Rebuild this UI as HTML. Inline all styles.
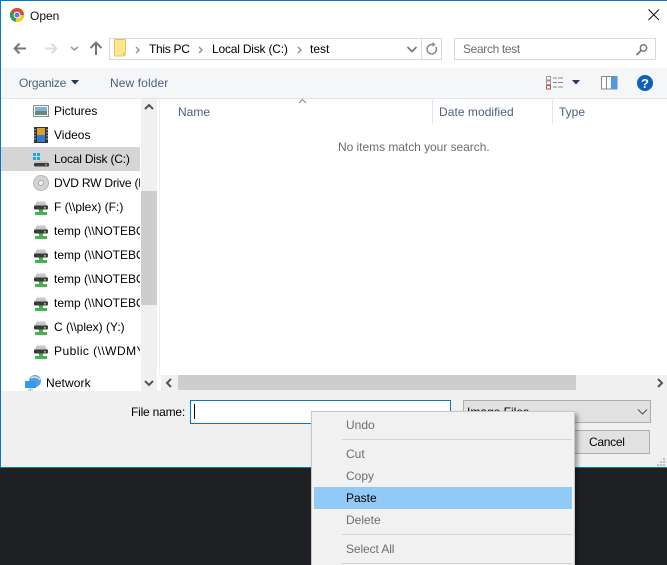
<!DOCTYPE html>
<html><head><meta charset="utf-8"><style>
html,body{margin:0;padding:0;width:667px;height:565px;overflow:hidden;background:#1f2023}
*{box-sizing:border-box}
body{font-family:"Liberation Sans",sans-serif;font-size:12px;color:#000;position:relative}
.a{position:absolute}
.t{position:absolute;white-space:nowrap;line-height:16px;font-size:12px}
.c{color:#4c607a}
.m{color:#6d6d6d}
svg{position:absolute;overflow:hidden}
</style></head><body>
<div class="a" style="left:0;top:0;width:667px;height:468px;background:#fff;border-top:1px solid #0078d7;border-left:1px solid #0078d7;border-bottom:1px solid #0078d7"></div>

<svg style="left:10px;top:8px" width="14" height="14" viewBox="0 0 14 14"><circle cx="7" cy="7" r="7" fill="#e0453a"/><path d="M7 7L13.9 7A7 7 0 0 1 5 13.7Z" fill="#f7c92e"/><path d="M7 7L5.5 13.8A7 7 0 0 1 1 3.4Z" fill="#2f9e4f"/><circle cx="7" cy="7" r="3.4" fill="#fff"/><circle cx="7" cy="7" r="2.5" fill="#4a86e8"/></svg>
<div class="t" style="left:30px;top:8px;color:#111">Open</div>
<svg style="left:647px;top:8px" width="14" height="14"><path d="M1.500 1.500L12 12M12 1.500L1.500 12" stroke="#111" stroke-width="1" fill="none"/></svg>

<svg style="left:13px;top:40px" width="100" height="18"><path d="M2 8.500H13M6.500 3.500L1.700 8.500L6.500 13.500" stroke="#777" stroke-width="2" fill="none"/><path d="M32 8.500H43M38.500 3.500L43.300 8.500L38.500 13.500" stroke="#dcdcdc" stroke-width="2" fill="none"/><path d="M58 7L61.500 10L65 7" stroke="#999" stroke-width="1.500" fill="none"/><path d="M83 2V15M77.500 8L83 2.500L88.500 8" stroke="#777" stroke-width="2" fill="none"/></svg>

<div class="a" style="left:109px;top:38px;width:333px;height:22px;background:#fff;border:1px solid #d9d9d9"></div>
<div class="a" style="left:421px;top:39px;width:1px;height:20px;background:#d9d9d9"></div>
<svg style="left:113px;top:39px" width="15" height="18"><path d="M1.500 .5H12.500V13.500L10 17H1.500Z" fill="#fde68f" stroke="#e3c565"/><path d="M10 13.500H12.500V17H10Z" fill="#e9c650"/></svg>
<svg style="left:134px;top:44px" width="190" height="12"><path d="M2 3L5 6L2 9" stroke="#8d8d8d" stroke-width="1.400" fill="none"/><path d="M65 3L68 6L65 9" stroke="#8d8d8d" stroke-width="1.400" fill="none"/><path d="M164 3L167 6L164 9" stroke="#8d8d8d" stroke-width="1.400" fill="none"/></svg>
<div class="t" style="left:149px;top:41px;letter-spacing:-.3px">This PC</div>
<div class="t" style="left:212px;top:41px;letter-spacing:-.2px">Local Disk (C:)</div>
<div class="t" style="left:310px;top:41px">test</div>
<svg style="left:406px;top:45px" width="12" height="9"><path d="M1.500 2L6 6.500L10.500 2" stroke="#777" stroke-width="1.700" fill="none"/></svg>
<svg style="left:425px;top:42px" width="14" height="14"><path d="M10.800 4.800A4.700 4.700 0 1 1 7 2.500H10" stroke="#888" stroke-width="1.500" fill="none"/><path d="M7.500 0V5L10.500 2.500Z" fill="#888"/></svg>

<div class="a" style="left:454px;top:38px;width:202px;height:22px;background:#fff;border:1px solid #d9d9d9"></div>
<div class="t" style="left:463px;top:41px;color:#6d6d6d;letter-spacing:-.35px">Search test</div>
<svg style="left:635px;top:43px" width="14" height="13"><circle cx="8.500" cy="5" r="3.200" stroke="#777" stroke-width="1.500" fill="none"/><path d="M6 7.500L1.500 12" stroke="#777" stroke-width="1.800"/></svg>

<div class="a" style="left:1px;top:68px;width:666px;height:30px;background:#f5f6f7"></div>
<div class="a" style="left:1px;top:98px;width:666px;height:1px;background:#e5e5e5"></div>
<div class="t c" style="left:19px;top:75px;letter-spacing:-.2px">Organize</div>
<svg style="left:71px;top:80px" width="9" height="5"><path d="M0 0H8L4 4.500Z" fill="#1f3a5f"/></svg>
<div class="t c" style="left:110px;top:75px;letter-spacing:.1px">New folder</div>
<svg style="left:546px;top:76px" width="36" height="14"><rect x=".5" y=".5" width="4" height="3.500" fill="none" stroke="#9a9a9a"/><rect x=".5" y="5" width="4" height="3.500" fill="none" stroke="#9a9a9a"/><rect x=".5" y="9.500" width="4" height="3.500" fill="none" stroke="#c05050"/><path d="M7 2H11M12 2H17M7 6.500H11M12 6.500H17M7 11H11M12 11H17" stroke="#8a8a8a"/><path d="M26 4H34L30 8.500Z" fill="#1f3a5f"/></svg>
<svg style="left:601px;top:76px" width="17" height="14"><rect x=".5" y=".5" width="15.500" height="12.500" fill="#fff" stroke="#8a8a8a"/><rect x="10" y="1" width="6" height="12" fill="#4a9ae8"/><path d="M5.500 1V13" stroke="#8a8a8a"/></svg>
<svg style="left:637px;top:75px" width="16" height="16"><circle cx="8" cy="8" r="8" fill="#0b62bd"/><text x="8" y="13" font-family="Liberation Sans" font-size="13" font-weight="bold" fill="#fff" text-anchor="middle">?</text></svg>

<!-- nav -->
<div class="a" style="left:1px;top:147px;width:139px;height:24px;background:#d5d5d5"></div>
<div class="a" style="left:141px;top:99px;width:16px;height:292px;background:#f0f0f0"></div>
<div class="a" style="left:141px;top:191px;width:16px;height:114px;background:#cdcdcd"></div>
<svg style="left:144px;top:103px" width="11" height="8"><path d="M1 6L5 2L9 6" stroke="#555" stroke-width="2" fill="none"/></svg>
<svg style="left:144px;top:379px" width="11" height="8"><path d="M1 2L5 6L9 2" stroke="#555" stroke-width="2" fill="none"/></svg>
<div class="a" style="left:159px;top:99px;width:1px;height:276px;background:#f0f0f0"></div>

<svg style="left:33px;top:105px" width="16" height="12"><rect x=".5" y=".5" width="15" height="11" fill="#fff" stroke="#8d8d8d"/><rect x="2" y="2" width="12" height="4" fill="#7fb2dc"/><rect x="2" y="6" width="12" height="4" fill="#5f8f78"/></svg>
<svg style="left:34px;top:127px" width="14" height="16"><rect width="14" height="16" fill="#333"/><rect x="3" y="1" width="8" height="7" fill="#d9a030"/><rect x="3" y="8" width="8" height="7" fill="#2f78d0"/><path d="M1 2V14M13 2V14" stroke="#ccc" stroke-dasharray="1.500 1.500"/></svg>
<svg style="left:33px;top:153px" width="16" height="14"><path d="M0 0H3V3H0ZM4 0H7V3H4ZM0 4H3V7H0ZM4 4H7V7H4Z" fill="#18a8e8"/><path d="M3 8H14L16 10.500H1Z" fill="#c4c4c4"/><rect x="1" y="10" width="15" height="3.500" rx="1" fill="#3c3c3c"/><rect x="12" y="11" width="2" height="1.500" fill="#4fd14f"/></svg>
<svg style="left:33px;top:175px" width="16" height="16"><circle cx="8" cy="8" r="7.500" fill="#d3d3d3" stroke="#b5b5b5"/><circle cx="8" cy="8" r="2.500" fill="#f2f2f2" stroke="#aaa"/></svg>

<svg style="left:34px;top:201px" width="14" height="15"><defs><g id="nd"><path d="M2 2.500Q2 .5 4 .5H10Q12 .5 12 2.500L14 5H0Z" fill="#c6c6c6"/><rect x="0" y="4.500" width="14" height="4" rx="1" fill="#3a3a3a"/><rect x="10" y="6" width="2" height="1.500" fill="#5fd15f"/><path d="M5 8.500H9V11H13V14H1V11H5Z" fill="#45b34e"/></g></defs><use href="#nd"/></svg>
<svg style="left:34px;top:225px" width="14" height="15"><use href="#nd"/></svg>
<svg style="left:34px;top:249px" width="14" height="15"><use href="#nd"/></svg>
<svg style="left:34px;top:273px" width="14" height="15"><use href="#nd"/></svg>
<svg style="left:34px;top:297px" width="14" height="15"><use href="#nd"/></svg>
<svg style="left:34px;top:321px" width="14" height="15"><use href="#nd"/></svg>
<svg style="left:34px;top:345px" width="14" height="15"><use href="#nd"/></svg>
<svg style="left:25px;top:375px" width="17" height="16"><circle cx="10" cy="6" r="6" fill="#5b9bd5"/><path d="M6 3C9 1 13 2 15 5" stroke="#cfe6f7" stroke-width="1.500" fill="none"/><rect x="0" y="6" width="11" height="7" fill="#2e9bf0"/><path d="M3 15H8M5.500 13V15" stroke="#9bb" stroke-width="1"/></svg>

<div class="a" style="left:54px;top:99px;width:86px;height:292px;overflow:hidden">
<div class="t" style="left:0;top:4px">Pictures</div>
<div class="t" style="left:0;top:28px">Videos</div>
<div class="t" style="left:0;top:52px;letter-spacing:-.2px">Local Disk (C:)</div>
<div class="t" style="left:0;top:76px;letter-spacing:-.2px">DVD RW Drive (D:)</div>
<div class="t" style="left:0;top:100px">F (\\plex) (F:)</div>
<div class="t" style="left:0;top:124px">temp (\\NOTEBOOK</div>
<div class="t" style="left:0;top:148px">temp (\\NOTEBOOK</div>
<div class="t" style="left:0;top:172px">temp (\\NOTEBOOK</div>
<div class="t" style="left:0;top:196px">temp (\\NOTEBOOK</div>
<div class="t" style="left:0;top:220px">C (\\plex) (Y:)</div>
<div class="t" style="left:0;top:244px;letter-spacing:.45px">Public (\\WDMY</div>
</div>
<div class="t" style="left:46px;top:375px;letter-spacing:.1px">Network</div>

<!-- list -->
<div class="t c" style="left:178px;top:104px">Name</div>
<div class="t c" style="left:439px;top:104px;letter-spacing:.05px">Date modified</div>
<div class="t c" style="left:559px;top:104px">Type</div>
<div class="a" style="left:432px;top:99px;width:1px;height:25px;background:#e5e5e5"></div>
<div class="a" style="left:552px;top:99px;width:1px;height:25px;background:#e5e5e5"></div>
<svg style="left:298px;top:98px" width="10" height="6"><path d="M1 5L4.500 1.500L8 5" stroke="#888" fill="none"/></svg>
<div class="t" style="left:338px;top:139px;color:#6d6d6d;letter-spacing:-.04px">No items match your search.</div>

<div class="a" style="left:161px;top:375px;width:506px;height:16px;background:#f0f0f0"></div>
<div class="a" style="left:178px;top:375px;width:398px;height:15px;background:#cdcdcd"></div>
<svg style="left:165px;top:378px" width="8" height="10"><path d="M6 1L2 5L6 9" stroke="#555" stroke-width="2" fill="none"/></svg>
<svg style="left:656px;top:378px" width="8" height="10"><path d="M2 1L6 5L2 9" stroke="#555" stroke-width="2" fill="none"/></svg>

<!-- bottom -->
<div class="a" style="left:1px;top:391px;width:666px;height:76px;background:#f0f0f0"></div>
<div class="t" style="left:131px;top:404px;letter-spacing:-.2px">File name:</div>
<div class="a" style="left:190px;top:400px;width:261px;height:24px;background:#fff;border:1px solid #0078d7"></div>
<div class="a" style="left:194px;top:404px;width:1px;height:15px;background:#000"></div>
<div class="a" style="left:463px;top:400px;width:188px;height:23px;background:#e1e1e1;border:1px solid #adadad"></div>
<div class="t" style="left:467px;top:404px">Image Files</div>
<svg style="left:637px;top:408px" width="11" height="8"><path d="M1 1.500L5.500 6L10 1.500" stroke="#555" stroke-width="1.100" fill="none"/></svg>
<div class="a" style="left:520px;top:430px;width:130px;height:24px;background:#e1e1e1;border:1px solid #adadad"></div>
<div class="t" style="left:589px;top:434px;letter-spacing:-.3px">Cancel</div>
<svg style="left:656px;top:457px" width="10" height="10"><path d="M7 1H9V3H7ZM4 4H6V6H4ZM7 4H9V6H7ZM1 7H3V9H1ZM4 7H6V9H4ZM7 7H9V9H7Z" fill="#bdbdbd"/></svg>

<!-- context menu -->
<div class="a" style="left:311px;top:411px;width:264px;height:160px;background:#f1f1f1;border:1px solid #c8c8c8;box-shadow:3px 3px 4px rgba(0,0,0,.35)"></div>
<div class="a" style="left:342px;top:439px;width:230px;height:1px;background:#d4d4d4"></div>
<div class="a" style="left:342px;top:534px;width:230px;height:1px;background:#d4d4d4"></div>
<div class="a" style="left:342px;top:563px;width:230px;height:1px;background:#d4d4d4"></div>
<div class="a" style="left:314px;top:487px;width:258px;height:22px;background:#91c9f7"></div>
<div class="t m" style="left:346px;top:417px">Undo</div>
<div class="t m" style="left:346px;top:446px">Cut</div>
<div class="t m" style="left:346px;top:468px">Copy</div>
<div class="t" style="left:346px;top:490px">Paste</div>
<div class="t m" style="left:346px;top:512px">Delete</div>
<div class="t m" style="left:346px;top:541px;letter-spacing:-.1px">Select All</div>
</body></html>
